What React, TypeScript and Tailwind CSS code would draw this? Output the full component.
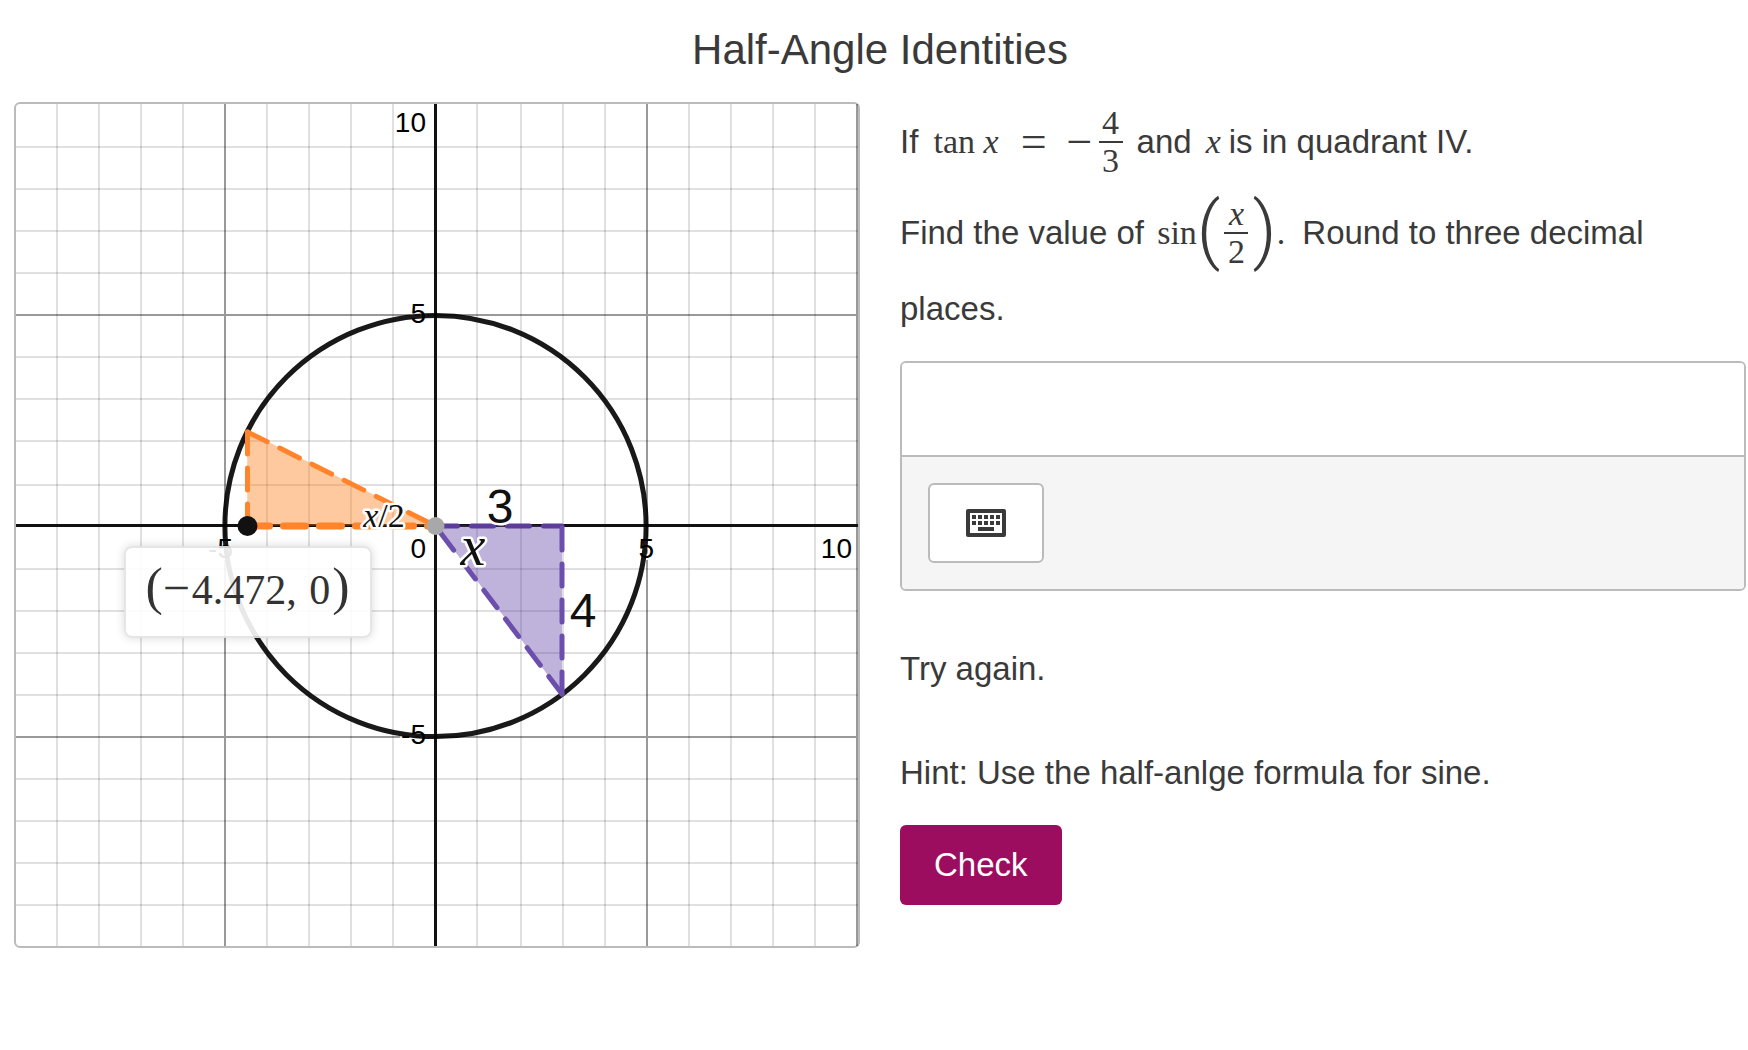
import { useState } from 'react';
import type { ReactNode } from 'react';

const VERTICAL_LINES = [41, 83, 125, 167, 251, 293, 335, 377, 461, 505, 547, 589, 673, 715, 757, 799];
const HORIZONTAL_LINES = [43, 85, 127, 169, 253, 295, 337, 381, 465, 507, 549, 591, 675, 717, 759, 801];

const TICK_LABELS = [
  { text: '10', x: 410, y: 28 },
  { text: '5', x: 410, y: 219 },
  { text: '-5', x: 410, y: 640 },
  { text: '0', x: 410, y: 454 },
  { text: '-5', x: 217, y: 454 },
  { text: '5', x: 638, y: 454 },
  { text: '10', x: 836, y: 454 },
];

function Graph() {
  return (
    <div className="relative aspect-square w-full rounded-md border-2 border-[#bbbbbb] bg-white">
      <svg viewBox="0 0 842 842" className="block size-full" role="img" aria-label="Circle of radius 5 with two reference triangles">
        <g stroke="#000" strokeOpacity="0.12" strokeWidth="2">
          {VERTICAL_LINES.map((x) => (
            <line key={x} x1={x} y1="0" x2={x} y2="842" />
          ))}
          {HORIZONTAL_LINES.map((y) => (
            <line key={y} x1="0" y1={y} x2="842" y2={y} />
          ))}
        </g>
        <g stroke="#000" strokeOpacity="0.4" strokeWidth="2">
          <path d="M209 0V842M631 0V842M841 0V842M0 211H842M0 633H842" />
        </g>
        <path d="M419.5 0V842M0 421.5H842" stroke="#111" strokeWidth="3" />

        <g fontFamily="Liberation Sans, sans-serif" fontSize="28" textAnchor="end" fill="#000" stroke="#fff" strokeWidth="4" paintOrder="stroke" strokeLinejoin="round">
          {TICK_LABELS.map((t) => (
            <text key={`${t.x}-${t.y}`} x={t.x} y={t.y}>{t.text}</text>
          ))}
        </g>

        <circle cx="419.5" cy="422" r="210.6" fill="none" stroke="#000" strokeOpacity="0.9" strokeWidth="5" />

        <path d="M231.2 327.4V421.5H419.5Z" fill="#ff7e1b" fillOpacity="0.42" />
        <path d="M419.5 421.5H546V590Z" fill="#6042a6" fillOpacity="0.4" />

        <g fill="none" strokeWidth="5" strokeLinecap="round" strokeDasharray="22 14">
          <path d="M231.5 328V422" stroke="#ff842b" />
          <path d="M231.5 328L419.5 422" stroke="#ff842b" />
          <path d="M231.5 422H419.5" stroke="#ff842b" strokeWidth="7" />
          <path d="M419.5 422H546" stroke="#5c3d9c" />
          <path d="M546 590V422" stroke="#6c4fac" />
          <path d="M546 590L419.5 422" stroke="#6c4fac" />
        </g>

        <circle cx="231.5" cy="422" r="10" fill="#111" />
        <circle cx="419.5" cy="422" r="9" fill="#a8a8a8" />

        <g fill="#111" stroke="#fff" strokeWidth="5" paintOrder="stroke" strokeLinejoin="round" textAnchor="middle">
          <text x="484" y="419" fontFamily="Liberation Sans, sans-serif" fontSize="48">3</text>
          <text x="567" y="523" fontFamily="Liberation Sans, sans-serif" fontSize="48">4</text>
          <text x="457" y="461" fontFamily="Liberation Serif, serif" fontSize="56" fontStyle="italic">x</text>
          <text x="368" y="423" fontFamily="Liberation Serif, serif" fontSize="34">
            <tspan fontStyle="italic">x</tspan>/2
          </text>
        </g>
      </svg>
      <div className="absolute left-[27.5%] top-[52.5%] h-[92px] w-[248px] -translate-x-1/2 rounded-lg border-2 border-black/10 bg-white/90 text-center font-['Liberation_Serif',serif] text-[42px] leading-[84px] whitespace-nowrap text-[#333333] shadow-[0_0_10px_rgba(0,0,0,0.15)]">
        <span className="text-[52px] leading-none">(</span>
        <span className="mr-0.5 text-[48px] leading-none">−</span>
        4.472, <span className="mr-0.5 ml-0.5">0</span>
        <span className="text-[52px] leading-none">)</span>
      </div>
    </div>
  );
}

function Fraction({ top, bottom, className = '' }: { top: ReactNode; bottom: ReactNode; className?: string }) {
  return (
    <span className={`inline-flex w-6 flex-col items-center align-[19px] font-['Liberation_Serif',serif] text-[34px] leading-9 ${className}`}>
      <span>{top}</span>
      <span className="h-0.5 w-full bg-[#3a3a3a]" />
      <span>{bottom}</span>
    </span>
  );
}

function MathText({ children, className = '' }: { children: ReactNode; className?: string }) {
  return <span className={`font-['Liberation_Serif',serif] text-[34px] leading-none ${className}`}>{children}</span>;
}

function Operator({ children, className = '' }: { children: ReactNode; className?: string }) {
  return <span className={`align-[-4px] font-['Liberation_Serif',serif] text-[46px] leading-[0] ${className}`}>{children}</span>;
}

function Delimiter({ children }: { children: ReactNode }) {
  return <span className="align-[-11px] font-[Roboto,sans-serif] text-[74px] leading-[0] font-light">{children}</span>;
}

function KeyboardIcon() {
  return (
    <svg viewBox="0 0 40 28" className="h-7 w-10" fill="#3a3a3a" aria-hidden="true">
      <path fillRule="evenodd" d="M2 0H38Q40 0 40 2V26Q40 28 38 28H2Q0 28 0 26V2Q0 0 2 0ZM4 4V24H36V4Z" />
      {[6, 12, 18, 24, 30].map((x) => (
        <path key={x} d={`M${x} 6h4v4h-4zM${x} 12h4v4h-4z`} />
      ))}
      <rect x="12" y="18" width="16" height="4" />
    </svg>
  );
}

export default function App() {
  const [answer, setAnswer] = useState('');

  return (
    <main className="min-h-screen bg-white pt-[26px] pr-0.5 pl-3.5 font-['Liberation_Sans',sans-serif] text-[33px] text-[#3a3a3a]">
      <h1 className="mb-7 text-center text-[42px] leading-[48px]">Half-Angle Identities</h1>
      <div className="grid grid-cols-2 items-start gap-10">
        <Graph />
        <section className="pt-0.5">
          <p className="leading-[76px]">
            If <MathText className="ml-1.5">tan <i>x</i></MathText>
            <Operator className="mr-5 ml-[22px]">=</Operator>
            <Operator className="mr-1.5">−</Operator>
            <Fraction top="4" bottom="3" />
            <span className="ml-3.5">and</span>
            <MathText className="mr-2 ml-3.5"><i>x</i></MathText>
            is in quadrant IV.
          </p>
          <p className="mt-[15px] leading-[76px]">
            Find the value of <MathText className="ml-1">sin</MathText>
            <Delimiter>(</Delimiter>
            <Fraction top={<i>x</i>} bottom="2" className="mx-1" />
            <Delimiter>)</Delimiter>
            <MathText className="mr-2">.</MathText> <span>Round to three decimal</span> <span>places.</span>
          </p>

          <div className="mt-3.5 overflow-hidden rounded-md border-2 border-[#bbbbbb]">
            <input
              aria-label="Answer"
              className="block h-[92px] w-full bg-white px-6 outline-none"
              value={answer}
              onChange={(e) => setAnswer(e.target.value)}
            />
            <div className="border-t-2 border-[#bbbbbb] bg-[#f5f5f5] p-[26px]">
              <button type="button" aria-label="Open keypad" className="flex h-20 w-[116px] items-center justify-center rounded-md border-2 border-[#bbbbbb] bg-white">
                <KeyboardIcon />
              </button>
            </div>
          </div>

          <p className="mt-[54px] leading-[48px]">Try again.</p>
          <p className="mt-14 leading-[48px]">Hint: Use the half-anlge formula for sine.</p>
          <button type="button" className="mt-7 flex h-20 items-center rounded-md bg-[#9c0d5f] px-[34px] text-white">
            Check
          </button>
        </section>
      </div>
    </main>
  );
}
